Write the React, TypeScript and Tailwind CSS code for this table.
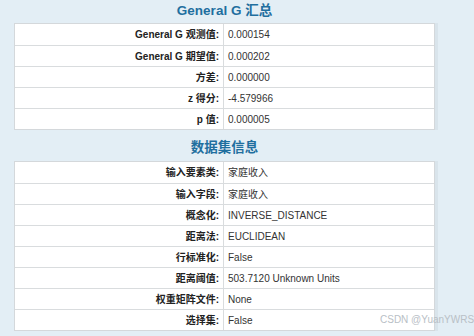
import React from 'react';

const summaryRows: [string, string][] = [
  ['General G 观测值:', '0.000154'],
  ['General G 期望值:', '0.000202'],
  ['方差:', '0.000000'],
  ['z 得分:', '-4.579966'],
  ['p 值:', '0.000005'],
];

const datasetRows: [string, string][] = [
  ['输入要素类:', '家庭收入'],
  ['输入字段:', '家庭收入'],
  ['概念化:', 'INVERSE_DISTANCE'],
  ['距离法:', 'EUCLIDEAN'],
  ['行标准化:', 'False'],
  ['距离阈值:', '503.7120 Unknown Units'],
  ['权重矩阵文件:', 'None'],
  ['选择集:', 'False'],
];

const InfoTable = ({ rows }: { rows: [string, string][] }) => (
  <div className="w-[421px] border border-[#d4d8db] bg-white shadow-[3px_0_0_#d9e4eb]">
    {rows.map(([label, value], i) => (
      <div
        key={label}
        className={`flex h-[21px] items-center ${i > 0 ? 'border-t border-[#d9dcde]' : ''}`}
      >
        <div className="w-[209px] h-full flex items-center justify-end pr-[4px] border-r border-[#d9dcde] font-bold text-[#222]">
          {label}
        </div>
        <div className="flex-1 pl-[4px] text-[#333]">{value}</div>
      </div>
    ))}
  </div>
);

const App: React.FC = () => {
  return (
    <div
      className="relative w-[474px] h-[336px] overflow-hidden bg-[#e3eef5] pl-[14px] text-[10px]"
      style={{ fontFamily: '"Liberation Sans", "Noto Sans CJK SC", sans-serif' }}
    >
      <div className="w-[421px] h-[23px] flex justify-center pt-[1px] text-[13.5px] font-bold leading-[19px] text-[#1f6f9f]">
        General G 汇总
      </div>
      <InfoTable rows={summaryRows} />

      <div className="w-[421px] h-[31px] flex justify-center pt-[7px] text-[13.5px] font-bold leading-[22px] text-[#1f6f9f]">
        数据集信息
      </div>
      <InfoTable rows={datasetRows} />

      {/* watermark */}
      <div className="absolute left-[380px] top-[313px] whitespace-nowrap text-[10px] leading-[14px] text-[#b9c0c6]">
        CSDN @YuanYWRS
      </div>
    </div>
  );
};

export default App;
